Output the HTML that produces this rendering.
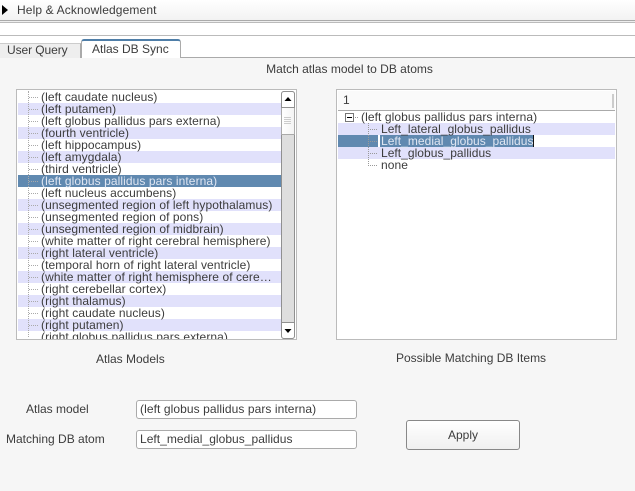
<!DOCTYPE html>
<html><head><meta charset="utf-8"><style>
html,body{margin:0;padding:0}
body{width:635px;height:491px;overflow:hidden;background:#f6f6f6;position:relative;font-family:"Liberation Sans",sans-serif;font-size:12px;color:#3c3c3c}
div{position:absolute;box-sizing:border-box;white-space:nowrap}
.r{left:0;height:12px;line-height:12px}
.s{background:#e1e1fb}
.t{position:absolute;line-height:12px;letter-spacing:.08px}
</style></head><body>
<div style="left:0;top:0;width:635px;height:20px;background:linear-gradient(#fff,#f2f2f2)"></div>
<div style="left:0;top:20px;width:635px;height:1px;background:#aaa"></div>
<div style="left:0;top:21px;width:635px;height:1px;background:#eee"></div>
<div style="left:0;top:22px;width:635px;height:1px;background:#bbb"></div>
<div style="left:0;top:23px;width:635px;height:12px;background:#fff"></div>
<div style="left:0;top:35px;width:635px;height:1px;background:#bbb"></div>
<div style="left:0;top:36px;width:635px;height:21px;background:#fff"></div>
<div style="left:0;top:57px;width:635px;height:1px;background:#aaa"></div>
<svg style="position:absolute;left:2px;top:5px" width="7" height="10"><path d="M0 0L6 5L0 10Z" fill="#000"/></svg>
<div style="left:17px;top:2px;line-height:16px;letter-spacing:.13px">Help &amp; Acknowledgement</div>
<div style="left:0;top:43px;width:81px;height:15px;background:#eee;border-right:1px solid #aaa;border-top:1px solid #ccc"></div>
<div style="left:7px;top:42px;line-height:16px;letter-spacing:-.08px">User Query</div>
<div style="left:81px;top:39px;width:100px;height:19px;background:#fff;border:1px solid #aaa;border-top:2px solid #4f7ea8;border-bottom:none;border-radius:3px 3px 0 0"></div>
<div style="left:92px;top:41px;line-height:16px">Atlas DB Sync</div>
<div style="left:0;top:61px;width:635px;text-align:center;line-height:16px;padding-left:64px">Match atlas model to DB atoms</div>

<div style="left:16px;top:89px;width:281px;height:251px;background:#fff;border:1px solid #bbb;overflow:hidden">
<div style="left:1px;top:1px;width:263px;height:249px;overflow:hidden">
<div class="r" style="top:0;width:263px"></div>
<div class="r s" style="top:12px;width:263px"></div>
<div class="r s" style="top:36px;width:263px"></div>
<div class="r s" style="top:60px;width:263px"></div>
<div class="r" style="top:84px;width:263px;background:#6089b0"></div>
<div class="r s" style="top:108px;width:263px"></div>
<div class="r s" style="top:132px;width:263px"></div>
<div class="r s" style="top:156px;width:263px"></div>
<div class="r s" style="top:180px;width:263px"></div>
<div class="r s" style="top:204px;width:263px"></div>
<div class="r s" style="top:228px;width:263px"></div>
<div style="left:10px;top:0;width:1px;height:246px;border-left:1px dotted #aaa"></div>
<div style="left:11px;top:6px;width:10px;height:240px;background:repeating-linear-gradient(#aaa 0 1px,transparent 1px 12px);-webkit-mask:repeating-linear-gradient(90deg,#000 0 1px,transparent 1px 2px)"></div>
<div class="t" style="left:23px;top:0">(left caudate nucleus)</div>
<div class="t" style="left:23px;top:12px">(left putamen)</div>
<div class="t" style="left:23px;top:24px">(left globus pallidus pars externa)</div>
<div class="t" style="left:23px;top:36px">(fourth ventricle)</div>
<div class="t" style="left:23px;top:48px">(left hippocampus)</div>
<div class="t" style="left:23px;top:60px">(left amygdala)</div>
<div class="t" style="left:23px;top:72px">(third ventricle)</div>
<div class="t" style="left:23px;top:84px;color:#dfe6f2">(left globus pallidus pars interna)</div>
<div class="t" style="left:23px;top:96px">(left nucleus accumbens)</div>
<div class="t" style="left:23px;top:108px">(unsegmented region of left hypothalamus)</div>
<div class="t" style="left:23px;top:120px">(unsegmented region of pons)</div>
<div class="t" style="left:23px;top:132px">(unsegmented region of midbrain)</div>
<div class="t" style="left:23px;top:144px">(white matter of right cerebral hemisphere)</div>
<div class="t" style="left:23px;top:156px">(right lateral ventricle)</div>
<div class="t" style="left:23px;top:168px">(temporal horn of right lateral ventricle)</div>
<div class="t" style="left:23px;top:180px">(white matter of right hemisphere of cere…</div>
<div class="t" style="left:23px;top:192px">(right cerebellar cortex)</div>
<div class="t" style="left:23px;top:204px">(right thalamus)</div>
<div class="t" style="left:23px;top:216px">(right caudate nucleus)</div>
<div class="t" style="left:23px;top:228px">(right putamen)</div>
<div class="t" style="left:23px;top:240px">(right globus pallidus pars externa)</div>
</div>
<div style="left:264px;top:1px;width:14px;height:248px;background:#dedede;border:1px solid #909090;border-radius:3px"></div>
<div style="left:264px;top:1px;width:14px;height:17px;background:#fff;border:1px solid #909090;border-radius:3px 3px 0 0"></div>
<svg style="position:absolute;left:267px;top:7px" width="8" height="4"><path d="M4 0L7.500 4H.5Z" fill="#000"/></svg>
<div style="left:264px;top:18px;width:14px;height:27px;background:linear-gradient(90deg,#fff,#f4f4f4);border:1px solid #aaa;border-top:none"></div>
<div style="left:267px;top:27px;width:7px;height:1px;background:#ccc;box-shadow:0 2px #ccc,0 4px #ccc,0 6px #ccc"></div>
<div style="left:264px;top:232px;width:14px;height:17px;background:#fff;border:1px solid #909090;border-radius:0 0 3px 3px"></div>
<svg style="position:absolute;left:267px;top:239px" width="8" height="4"><path d="M.5 0H7.500L4 4Z" fill="#000"/></svg>
</div>

<div style="left:336px;top:89px;width:281px;height:251px;background:#fff;border:1px solid #bbb;overflow:hidden">
<div style="left:1px;top:1px;width:277px;height:20px;background:#fafafa;border-bottom:1px solid #aaa"></div>
<div style="left:275px;top:4px;width:2px;height:14px;background:#ccc"></div>
<div class="t" style="left:6px;top:4px">1</div>
<div class="r s" style="left:1px;top:33px;width:277px"></div>
<div class="r" style="left:1px;top:45px;width:40px;background:#6089b0"></div>
<div class="r" style="left:43px;top:45px;width:154px;background:#6089b0;border-right:1px solid #111"></div>
<div class="r s" style="left:1px;top:57px;width:277px"></div>
<svg style="position:absolute;left:8px;top:22px" width="40" height="70"><rect x="0.5" y="1.500" width="8" height="8" fill="#fff" stroke="#777"/><path d="M2 5.500H7" stroke="#000"/><path d="M10 5.500H14M23.500 11V54M25 17.500H32M25 29.500H32M25 41.500H32M25 53.500H32" stroke="#999" stroke-dasharray="1 1" fill="none"/></svg>
<div class="t" style="left:24px;top:21px">(left globus pallidus pars interna)</div>
<div class="t" style="left:44px;top:33px;letter-spacing:.04px">Left_lateral_globus_pallidus</div>
<div class="t" style="left:44px;top:45px;letter-spacing:.04px;color:#dfe6f2">Left_medial_globus_pallidus</div>
<div class="t" style="left:44px;top:57px;letter-spacing:.04px">Left_globus_pallidus</div>
<div class="t" style="left:44px;top:69px">none</div>
</div>

<div style="left:96px;top:351px;line-height:16px">Atlas Models</div>
<div style="left:396px;top:350px;line-height:16px">Possible Matching DB Items</div>
<div style="left:26px;top:401px;line-height:16px">Atlas model</div>
<div style="left:6px;top:431px;line-height:16px">Matching DB atom</div>
<div style="left:136px;top:400px;width:221px;height:19px;background:#fff;border:1px solid #aaa;border-radius:3px;line-height:17px;padding-left:3px;letter-spacing:.08px">(left globus pallidus pars interna)</div>
<div style="left:136px;top:430px;width:221px;height:19px;background:#fff;border:1px solid #aaa;border-radius:3px;line-height:17px;padding-left:3px;letter-spacing:.04px">Left_medial_globus_pallidus</div>
<div style="left:406px;top:420px;width:114px;height:30px;background:linear-gradient(#fff,#f0f0f0);border:1px solid #888;border-radius:3px;text-align:center;line-height:28px">Apply</div>
</body></html>
